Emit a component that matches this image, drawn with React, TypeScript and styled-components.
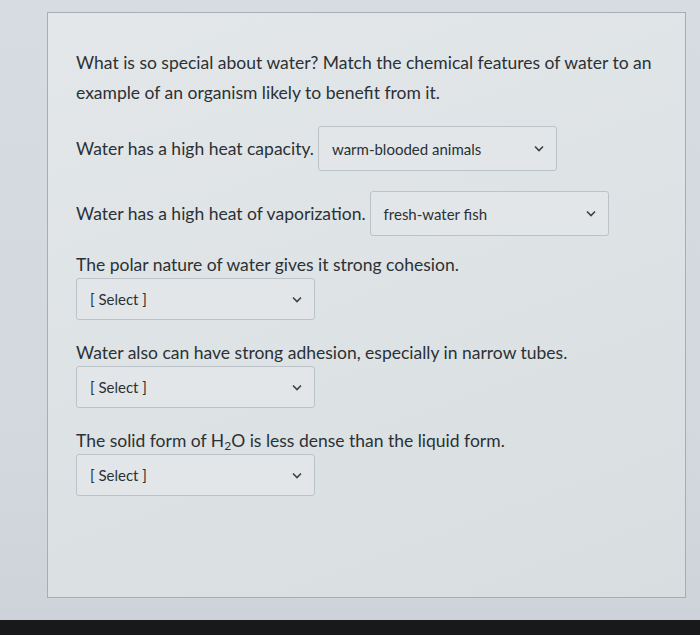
import React from 'react';
import styled, { createGlobalStyle } from 'styled-components';

const GlobalStyle = createGlobalStyle`
  html, body {
    margin: 0;
    padding: 0;
    background: #d3d9de;
  }
  body {
    font-family: Lato, "Open Sans", "Liberation Sans", sans-serif;
    color: #2b3134;
  }
`;

const Screen = styled.div`
  width: 700px;
  height: 635px;
  display: flex;
  flex-direction: column;
  overflow: hidden;
  background: linear-gradient(180deg, #d6dce1 0%, #d2d8dd 70%, #cdd3d8 100%);
`;

const Card = styled.div`
  margin: 12px 14px 0 47px;
  height: 586px;
  box-sizing: border-box;
  border: 1px solid #a7aeb3;
  background: linear-gradient(160deg, #e3e7ea 0%, #dde2e5 55%, #d8dde0 100%);
  padding: 35px 20px 0 28px;
`;

const Prompt = styled.p`
  margin: 0 0 18px;
  font-size: 17.5px;
  line-height: 30px;
  width: 600px;
`;

const InlineRow = styled.div<{ $gap: number }>`
  display: flex;
  align-items: center;
  margin-bottom: ${p => p.$gap}px;
`;

const Label = styled.div`
  font-size: 17.5px;
  line-height: 27px;
  margin-right: 4px;
`;

const Block = styled.div<{ $gap: number }>`
  margin-bottom: ${p => p.$gap}px;
`;

const Dropdown = styled.div<{ $tall?: boolean }>`
  width: 239px;
  height: ${p => (p.$tall ? 45 : 42)}px;
  box-sizing: border-box;
  border: 1px solid #bcc3c8;
  border-radius: 3px;
  background: #e2e6e9;
  display: flex;
  align-items: center;
  justify-content: space-between;
  padding: 0 12px 0 13px;
  font-size: 15px;
`;

const Bottom = styled.div`
  margin-top: auto;
  height: 15px;
  background: #18191b;
`;

const Chevron = () => (
  <svg width="10" height="7" viewBox="0 0 10 7">
    <path d="M1 1.5 L5 5.5 L9 1.5" fill="none" stroke="#3a4044" strokeWidth="1.6" />
  </svg>
);

const Select = ({ value, tall }: { value: string; tall?: boolean }) => (
  <Dropdown $tall={tall}>
    <span>{value}</span>
    <Chevron />
  </Dropdown>
);

export default function App() {
  return (
    <Screen>
      <GlobalStyle />
      <Card>
        <Prompt>
          What is so special about water? Match the chemical features of water to an
          example of an organism likely to benefit from it.
        </Prompt>
        <InlineRow $gap={20}>
          <Label>Water has a high heat capacity.</Label>
          <Select value="warm-blooded animals" tall />
        </InlineRow>
        <InlineRow $gap={15}>
          <Label>Water has a high heat of vaporization.</Label>
          <Select value="fresh-water fish" tall />
        </InlineRow>
        <Block $gap={19}>
          <Label>The polar nature of water gives it strong cohesion.</Label>
          <Select value="[ Select ]" />
        </Block>
        <Block $gap={19}>
          <Label>Water also can have strong adhesion, especially in narrow tubes.</Label>
          <Select value="[ Select ]" />
        </Block>
        <Block $gap={0}>
          <Label>
            The solid form of H<sub style={{ fontSize: '12px', verticalAlign: '-3px', lineHeight: 0 }}>2</sub>O is less dense than the liquid form.
          </Label>
          <Select value="[ Select ]" />
        </Block>
      </Card>
      <Bottom />
    </Screen>
  );
}
